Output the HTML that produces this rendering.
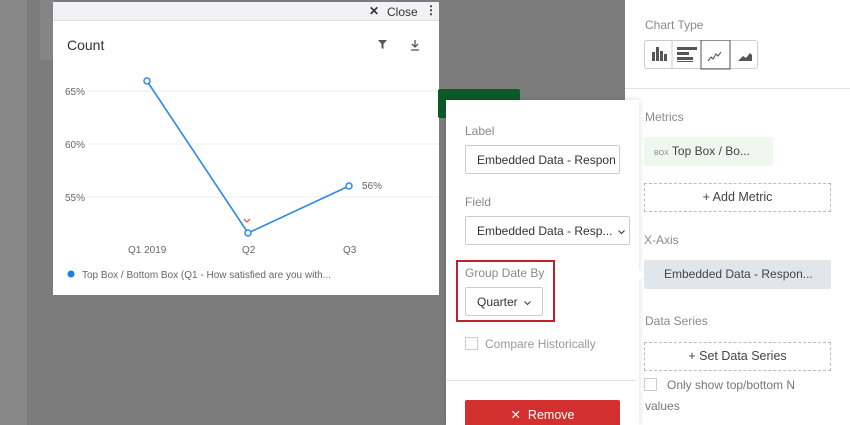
<!DOCTYPE html>
<html><head><style>
*{box-sizing:border-box;margin:0;padding:0}
html,body{width:850px;height:425px;overflow:hidden}
body{position:relative;background:#7c7c7c;font-family:"Liberation Sans",sans-serif;color:#333}
.abs{position:absolute}
.lbl{font-size:12px;color:#8a8a8a}
.chev{display:inline-block;width:7px;height:4px;margin-left:6px;vertical-align:middle}
</style></head><body>
<div class="abs" style="left:0;top:0;width:27px;height:425px;background:#888"></div>
<div class="abs" style="left:40px;top:0;width:14px;height:60px;background:#858585"></div>
<!-- card -->
<div class="abs" style="left:53px;top:2px;width:386px;height:293px;background:#fff">
 <div style="height:19px;background:#f2f2f6;border-bottom:1px solid #ddd;position:relative;font-size:12px;color:#333">
  <span class="abs" style="left:316px;top:2px;font-weight:bold">✕</span>
  <span class="abs" style="left:334px;top:3px">Close</span>
  <span class="abs" style="left:372px;top:1px;font-weight:bold">⋮</span>
 </div>
 <div class="abs" style="left:14px;top:35px;font-size:14px;color:#333">Count</div>
 <svg class="abs" style="left:0;top:0" width="386" height="293">
  <path d="M325 38h9l-3.5 4v5l-2 -1v-4z" fill="#555"/>
  <path d="M362 38v7M359 42l3 3 3-3M358 48h8" stroke="#555" stroke-width="1.3" fill="none"/>
  <g stroke="#eee" stroke-width="1"><line x1="35" y1="89" x2="386" y2="89"/><line x1="35" y1="142" x2="386" y2="142"/><line x1="35" y1="195" x2="386" y2="195"/></g>
  <g font-size="10" fill="#666" font-family="Liberation Sans"><text x="12" y="93">65%</text><text x="12" y="146">60%</text><text x="12" y="199">55%</text>
  <text x="75" y="251">Q1 2019</text><text x="189" y="251">Q2</text><text x="290" y="251">Q3</text><text x="309" y="187">56%</text></g>
  <polyline points="94,79 195,231 296,184" fill="none" stroke="#2a8ae6" stroke-width="1.6"/>
  <g fill="#fff" stroke="#2a8ae6" stroke-width="1.5"><circle cx="94" cy="79" r="3"/><circle cx="195" cy="231" r="3"/><circle cx="296" cy="184" r="3"/></g>
  <path d="M191 217l3 3 3-3" stroke="#e33" fill="none" stroke-width="1"/>
  <circle cx="18" cy="272" r="3.5" fill="#1a7fe6"/>
  <text x="29" y="276" font-size="10" fill="#666" font-family="Liberation Sans">Top Box / Bottom Box (Q1 - How satisfied are you with...</text>
 </svg>
</div>
<div class="abs" style="left:438px;top:89px;width:82px;height:29px;background:#0b5a28;border-radius:2px"></div>
<!-- right panel -->
<div class="abs" style="left:625px;top:0;width:225px;height:425px;background:#fff"></div>
<div class="abs" style="left:625px;top:88px;width:225px;height:1px;background:#e3e3e3"></div>
<div class="abs lbl" style="left:645px;top:18px">Chart Type</div>
<div class="abs" style="left:644px;top:40px;width:114px;height:29px;border:1px solid #ccc;border-radius:3px;background:#fff"></div>
<svg class="abs" style="left:644px;top:40px" width="115" height="30">
 <line x1="28" y1="0" x2="28" y2="29" stroke="#ccc"/><line x1="86" y1="0" x2="86" y2="29" stroke="#ccc"/>
 <rect x="57" y="0" width="29" height="29" fill="none" stroke="#555" stroke-width="1"/>
 <g fill="#555"><rect x="8" y="12" width="3" height="9"/><rect x="12" y="7" width="3" height="14"/><rect x="16" y="11" width="3" height="10"/><rect x="20" y="14" width="3" height="7"/>
 <rect x="33" y="7" width="20" height="3"/><rect x="33" y="12" width="12" height="3"/><rect x="33" y="17" width="16" height="3"/><rect x="33" y="21" width="16" height="1"/>
 <path d="M94 21l5-5 3 2 4-5 2 2v6z"/></g>
 <path d="M64 21l3-4 2 2 3-5 2 2 3-4" stroke="#444" fill="none" stroke-width="1"/>
</svg>
<div class="abs lbl" style="left:645px;top:110px">Metrics</div>
<div class="abs" style="left:644px;top:137px;width:129px;height:29px;background:#eef8ee;border-radius:2px;font-size:12px;color:#444;padding:7px 10px;white-space:nowrap"><span style="font-size:7px;color:#888">BOX</span> Top Box / Bo...</div>
<div class="abs" style="left:644px;top:183px;width:187px;height:29px;border:1px dashed #bbb;font-size:12.5px;color:#444;text-align:center;line-height:27px">+ Add Metric</div>
<div class="abs lbl" style="left:644px;top:233px">X-Axis</div>
<div class="abs" style="left:644px;top:260px;width:187px;height:29px;background:#e1e6eb;border-radius:2px;font-size:12px;color:#444;padding:7px 20px;white-space:nowrap">Embedded Data - Respon...</div>
<div class="abs lbl" style="left:645px;top:314px">Data Series</div>
<div class="abs" style="left:644px;top:342px;width:187px;height:29px;border:1px dashed #bbb;font-size:12.5px;color:#444;text-align:center;line-height:27px">+ Set Data Series</div>
<div class="abs" style="left:644px;top:378px;width:13px;height:13px;border:1px solid #ccc"></div>
<div class="abs lbl" style="left:667px;top:378px;color:#777">Only show top/bottom N</div>
<div class="abs lbl" style="left:645px;top:399px;color:#777">values</div>
<!-- popover -->
<div class="abs" style="left:446px;top:100px;width:193px;height:325px;background:#fff;box-shadow:0 0 6px rgba(0,0,0,.15)"></div>
<div class="abs" style="left:635px;top:271px;width:8px;height:8px;background:#fff;transform:rotate(45deg)"></div>
<div class="abs lbl" style="left:465px;top:124px">Label</div>
<div class="abs" style="left:465px;top:145px;width:155px;height:29px;border:1px solid #ccc;border-radius:2px;font-size:12px;color:#333;padding:7px 11px;white-space:nowrap;overflow:hidden">Embedded Data - Respon</div>
<div class="abs lbl" style="left:465px;top:195px">Field</div>
<div class="abs" style="left:465px;top:216px;width:165px;height:29px;border:1px solid #ccc;border-radius:2px;font-size:12px;color:#333;padding:7px 11px;white-space:nowrap">Embedded Data - Resp...<svg class="chev" viewBox="0 0 7 4"><path d="M0.5 0.5l3 3 3-3" stroke="#333" fill="none"/></svg></div>
<div class="abs" style="left:456px;top:260px;width:99px;height:62px;border:2px solid #c0202e"></div>
<div class="abs lbl" style="left:465px;top:266px">Group Date By</div>
<div class="abs" style="left:465px;top:287px;width:78px;height:29px;border:1px solid #ccc;border-radius:2px;font-size:12px;color:#333;padding:7px 11px;white-space:nowrap">Quarter<svg class="chev" viewBox="0 0 7 4"><path d="M0.5 0.5l3 3 3-3" stroke="#333" fill="none"/></svg></div>
<div class="abs" style="left:465px;top:337px;width:13px;height:13px;border:1px solid #ccc"></div>
<div class="abs lbl" style="left:485px;top:337px;color:#999">Compare Historically</div>
<div class="abs" style="left:446px;top:380px;width:191px;height:1px;background:#e3e3e3"></div>
<div class="abs" style="left:465px;top:400px;width:155px;height:30px;background:#d32f2f;border-radius:2px;color:#fff;font-size:12.5px;text-align:center;line-height:30px">✕&nbsp; Remove</div>
</body></html>
